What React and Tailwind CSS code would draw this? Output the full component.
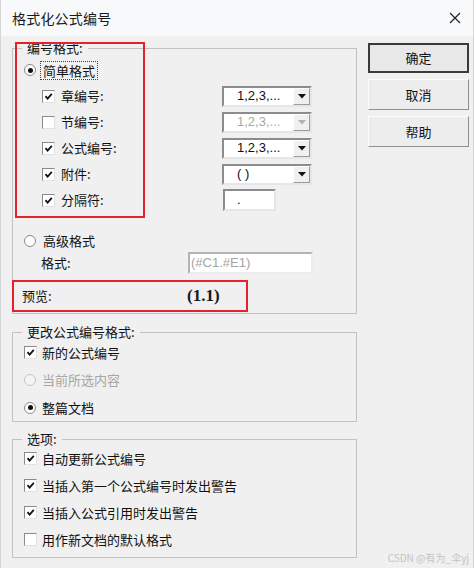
import React from 'react';

const Check = ({ checked }) => (
  <span className="inline-flex items-center justify-center w-[13px] h-[13px] shrink-0 bg-white border border-t-[#8a8a8a] border-l-[#8a8a8a] border-r-[#e2e2e2] border-b-[#e2e2e2]">
    {checked && (
      <svg width="9" height="9" viewBox="0 0 9 9">
        <path d="M1.5 4.2 L3.6 6.6 L7.8 1.8" fill="none" stroke="#111" strokeWidth="1.8" />
      </svg>
    )}
  </span>
);

const Radio = ({ checked, disabled }) => (
  <span
    className={`inline-flex items-center justify-center w-[12px] h-[12px] shrink-0 rounded-full border ${
      disabled ? 'border-[#c4c4c4] bg-[#f4f4f4]' : 'border-[#8a8a8a] bg-white'
    }`}
  >
    {checked && <span className="block w-[5px] h-[5px] rounded-full bg-[#111]" />}
  </span>
);

const Dropdown = ({ value, disabled }) => (
  <div className="flex w-[90px] h-[21px] bg-white border-2 border-t-[#8c8c8c] border-l-[#8c8c8c] border-r-[#e6e6e6] border-b-[#e6e6e6]">
    <div
      className={`flex-1 flex items-center pl-[13px] text-[13px] font-['Liberation_Sans',sans-serif] ${
        disabled ? 'text-[#a8a8a8]' : 'text-[#111]'
      }`}
    >
      {value}
    </div>
    <div className="w-[17px] h-full flex items-center justify-center bg-[#f0f0f0] border border-t-white border-l-white border-r-[#9a9a9a] border-b-[#9a9a9a]">
      <svg width="8" height="5" viewBox="0 0 8 5">
        <path d="M0 0 H8 L4 4.5 Z" fill={disabled ? '#b0b0b0' : '#111'} />
      </svg>
    </div>
  </div>
);

const Group = ({ label, className, children }) => (
  <fieldset className={`border border-[#c2c2c2] ${className}`}>
    <legend className="ml-[9px] px-[5px] leading-[16px] text-[13px] text-[#111]">{label}</legend>
    {children}
  </fieldset>
);

export default function App() {
  const numberRows = [
    { label: '章编号:', checked: true, control: <Dropdown value="1,2,3,..." /> },
    { label: '节编号:', checked: false, control: <Dropdown value="1,2,3,..." disabled /> },
    { label: '公式编号:', checked: true, control: <Dropdown value="1,2,3,..." /> },
    { label: '附件:', checked: true, control: <Dropdown value="( )" /> },
    {
      label: '分隔符:',
      checked: true,
      control: (
        <div className="w-[53px] h-[22px] ml-[1px] bg-white border-2 border-t-[#8c8c8c] border-l-[#8c8c8c] border-r-[#e6e6e6] border-b-[#e6e6e6] flex items-center pl-[12px] text-[13px] text-[#111] font-['Liberation_Sans',sans-serif]">
          .
        </div>
      ),
    },
  ];

  const options = [
    { label: '自动更新公式编号', checked: true },
    { label: '当插入第一个公式编号时发出警告', checked: true },
    { label: '当插入公式引用时发出警告', checked: true },
    { label: '用作新文档的默认格式', checked: false },
  ];

  return (
    <div className="relative w-[474px] h-[568px] overflow-hidden bg-[#f0f0f0] border-x border-[#d6d6d6] text-[13px] text-[#111] font-['Noto_Sans_CJK_SC','Noto_Sans',sans-serif]">
      {/* title bar */}
      <div className="h-[36px] flex items-center justify-between pl-[11px] pr-[11px] bg-[#f8f9fb]">
        <span className="text-[14px] tracking-[0.2px] text-[#1a1a1a]">格式化公式编号</span>
        <svg width="12" height="12" viewBox="0 0 12 12" className="mr-[1px]">
          <path d="M1 1 L11 11 M11 1 L1 11" stroke="#222" strokeWidth="1.2" />
        </svg>
      </div>

      <div className="flex pl-[11px]">
        {/* left column */}
        <div className="relative w-[345px]">
          {/* annotation frame around simple format */}
          <div className="absolute left-[3px] top-[6px] w-[130px] h-[176px] border-2 border-[#e3232c] pointer-events-none" />

          <Group label="编号格式:" className="mt-[4px] h-[274px]">
            <div className="pt-[1px]">
              <div className="h-[26px] flex items-center pl-[11px]">
                <Radio checked />
                <span className="ml-[4px] px-[2px] leading-[17px] border border-dotted border-[#444]">简单格式</span>
              </div>
              {numberRows.map((row) => (
                <div key={row.label} className="h-[26px] flex items-center">
                  <div className="w-[209px] flex items-center pl-[29px]">
                    <Check checked={row.checked} />
                    <span className="ml-[6px]">{row.label}</span>
                  </div>
                  {row.control}
                </div>
              ))}

              <div className="mt-[17px] h-[22px] flex items-center pl-[11px]">
                <Radio />
                <span className="ml-[7px]">高级格式</span>
              </div>
              <div className="h-[22px] flex items-center">
                <span className="w-[175px] pl-[28px]">格式:</span>
                <div className="w-[125px] h-[22px] bg-white border-2 border-t-[#b4b4b4] border-l-[#b4b4b4] border-r-[#ececec] border-b-[#ececec] flex items-center pl-[1px] text-[13px] text-[#a4a4a4] font-['Liberation_Sans',sans-serif]">
                  (#C1.#E1)
                </div>
              </div>

              <div className="mt-[6px] -ml-[1px] w-[236px] h-[32px] border-2 border-[#e3232c] flex items-center">
                <span className="pl-[8px] w-[173px]">预览:</span>
                <span className="font-['Liberation_Serif',serif] font-semibold text-[17px] text-[#1a1a1a]">(1.1)</span>
              </div>
            </div>
          </Group>

          <Group label="更改公式编号格式:" className="mt-[10px] h-[98px]">
            <div className="-mt-[1px] h-[27px] flex items-center pl-[11px]">
              <Check checked />
              <span className="ml-[5px]">新的公式编号</span>
            </div>
            <div className="h-[28px] flex items-center pl-[11px] text-[#a6a6a6]">
              <Radio disabled />
              <span className="ml-[6px]">当前所选内容</span>
            </div>
            <div className="h-[27px] flex items-center pl-[11px]">
              <Radio checked />
              <span className="ml-[6px]">整篇文档</span>
            </div>
          </Group>

          <Group label="选项:" className="mt-[9px] h-[127px]">
            <div className="-mt-[2px]">
              {options.map((opt) => (
                <div key={opt.label} className="h-[27px] flex items-center pl-[11px]">
                  <Check checked={opt.checked} />
                  <span className="ml-[5px]">{opt.label}</span>
                </div>
              ))}
            </div>
          </Group>
        </div>

        {/* buttons */}
        <div className="ml-[11px] pt-[7px] flex flex-col gap-[6px] w-[101px]">
          <button className="h-[30px] bg-[#e8e8e8] border-2 border-[#3a3a3a] text-[13px]">确定</button>
          <button className="h-[31px] bg-[#ededed] border border-t-[#fbfbfb] border-l-[#fbfbfb] border-r-[#8f8f8f] border-b-[#8f8f8f] text-[13px]">
            取消
          </button>
          <button className="h-[31px] bg-[#ededed] border border-t-[#fbfbfb] border-l-[#fbfbfb] border-r-[#8f8f8f] border-b-[#8f8f8f] text-[13px]">
            帮助
          </button>
        </div>
      </div>

      <span className="absolute right-[4px] bottom-[3px] text-[10px] text-[#c4c4c4]">CSDN @有为_伞yj</span>
    </div>
  );
}
